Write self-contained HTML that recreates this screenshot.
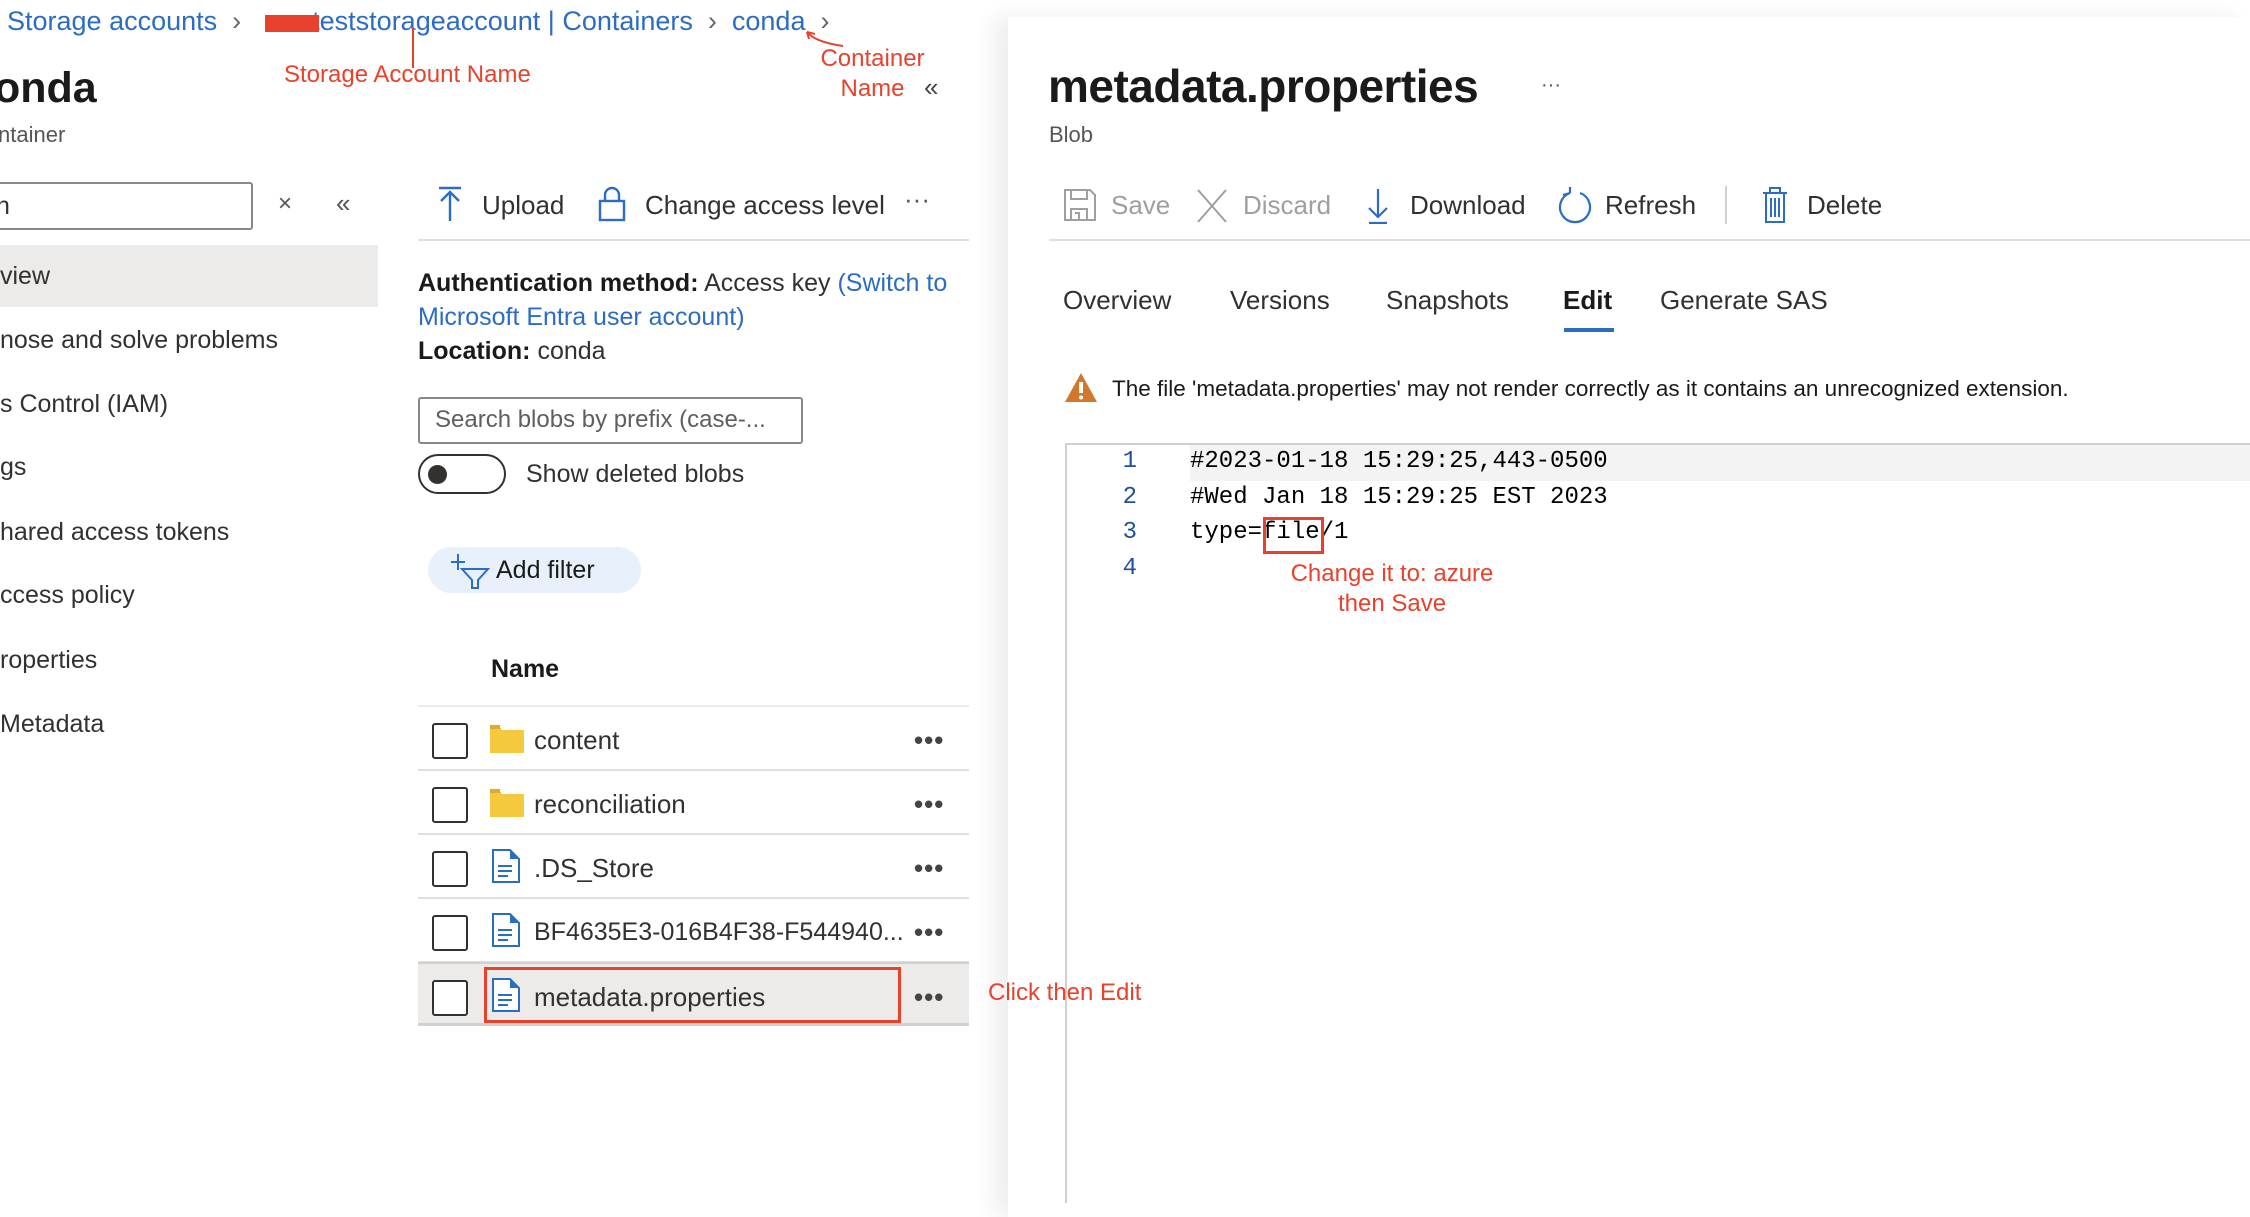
<!DOCTYPE html>
<html><head><meta charset="utf-8"><style>
*{margin:0;padding:0;box-sizing:border-box}
body{width:2250px;height:1178px;overflow:hidden;background:#fff;font-family:"Liberation Sans",sans-serif;color:#323130;position:relative}
.a{position:absolute;white-space:nowrap}
.bl{color:#2b6cc4}
.red{color:#e8412c}
.nav{font-size:25px;left:0}
.row{position:absolute;left:418px;width:551px;height:64px;border-bottom:2px solid #e1dfdd}
.cb{position:absolute;left:14px;top:16px;width:36px;height:36px;border:2px solid #323130;border-radius:3px;background:#fff}
.rt{position:absolute;left:116px;top:16px;font-size:26px;line-height:34px}
.dots{position:absolute;left:496px;top:18px;font-size:26px;letter-spacing:1px;font-weight:bold;color:#444}
.ln{position:absolute;left:1095px;width:42px;text-align:right;font-family:"Liberation Mono",monospace;font-size:24px;color:#1f4f9f;line-height:36px}
.code{position:absolute;left:1190px;font-family:"Liberation Mono",monospace;font-size:24px;color:#000;line-height:36px}
</style></head><body>

<!-- breadcrumb -->
<div class="a bl" style="left:7px;top:4px;font-size:27px;line-height:34px">Storage accounts <span style="color:#666">&nbsp;›&nbsp;</span> <span style="display:inline-block;width:56px"></span>teststorageaccount | Containers <span style="color:#666">&nbsp;›&nbsp;</span> conda <span style="color:#666">&nbsp;›</span></div>
<div class="a" style="left:265px;top:15px;width:54px;height:17px;background:#e8412c"></div>
<div class="a" style="left:412px;top:28px;width:2px;height:40px;background:#e8412c"></div>
<div class="a red" style="left:284px;top:60px;font-size:24px;line-height:30px">Storage Account Name</div>
<svg class="a" style="left:805px;top:30px" width="40" height="20"><path d="M2 2 Q10 12 38 16" stroke="#e8412c" stroke-width="2" fill="none"/><path d="M2 2 L10 4 M2 2 L4 9" stroke="#e8412c" stroke-width="2"/></svg>
<div class="a red" style="left:815px;top:44px;font-size:24px;line-height:30px;text-align:center;width:115px">Container<br>Name</div>
<div class="a" style="left:924px;top:72px;font-size:26px;color:#444">«</div>

<!-- left blade -->
<div class="a" style="left:-6px;top:60px;font-size:43px;font-weight:bold;color:#1b1a19;line-height:56px">onda</div>
<div class="a" style="left:-2px;top:122px;font-size:22px;color:#555">ntainer</div>
<div class="a" style="left:-3px;top:182px;width:256px;height:48px;border:2px solid #8a8886;border-radius:3px"></div>
<div class="a" style="left:-4px;top:192px;font-size:25px">n</div>
<div class="a" style="left:278px;top:190px;font-size:24px;color:#555">×</div>
<div class="a" style="left:336px;top:188px;font-size:26px;color:#555">«</div>
<div class="a" style="left:0;top:245px;width:378px;height:62px;background:#edebe9"></div>
<div class="a nav" style="top:262px">view</div>
<div class="a nav" style="top:326px">nose and solve problems</div>
<div class="a nav" style="top:390px">s Control (IAM)</div>
<div class="a nav" style="top:453px">gs</div>
<div class="a nav" style="top:518px">hared access tokens</div>
<div class="a nav" style="top:581px">ccess policy</div>
<div class="a nav" style="top:646px">roperties</div>
<div class="a nav" style="top:710px">Metadata</div>

<!-- container toolbar -->
<svg class="a" style="left:437px;top:186px" width="26" height="36"><path d="M2 2H24M13 35V6M4 15L13 6L22 15" stroke="#2b6cc4" stroke-width="2.4" fill="none"/></svg>
<div class="a" style="left:482px;top:190px;font-size:26px">Upload</div>
<svg class="a" style="left:598px;top:186px" width="28" height="36"><path d="M7 15V9a7 7 0 0 1 14 0v6" stroke="#2b6cc4" stroke-width="2.4" fill="none"/><rect x="2" y="15" width="24" height="19" stroke="#2b6cc4" stroke-width="2.4" fill="none"/></svg>
<div class="a" style="left:645px;top:190px;font-size:26px">Change access level</div>
<div class="a" style="left:904px;top:184px;font-size:26px;color:#555">···</div>
<div class="a" style="left:418px;top:239px;width:551px;height:2px;background:#e1dfdd"></div>

<div class="a" style="left:418px;top:266px;font-size:25px;line-height:34px"><b style="color:#1b1a19">Authentication method:</b> Access key <span class="bl">(Switch to</span></div>
<div class="a bl" style="left:418px;top:300px;font-size:25px;line-height:34px">Microsoft Entra user account)</div>
<div class="a" style="left:418px;top:334px;font-size:25px;line-height:34px"><b style="color:#1b1a19">Location:</b> conda</div>

<div class="a" style="left:418px;top:397px;width:385px;height:47px;border:2px solid #8a8886;border-radius:3px"></div>
<div class="a" style="left:435px;top:406px;font-size:24px;color:#605e5c">Search blobs by prefix (case-...</div>
<div class="a" style="left:418px;top:454px;width:88px;height:40px;border:2px solid #323130;border-radius:20px"></div>
<div class="a" style="left:428px;top:465px;width:19px;height:19px;border-radius:50%;background:#323130"></div>
<div class="a" style="left:526px;top:460px;font-size:25px">Show deleted blobs</div>

<div class="a" style="left:428px;top:547px;width:213px;height:46px;border-radius:23px;background:#e8f1fb"></div>
<svg class="a" style="left:450px;top:552px" width="40" height="38"><path d="M8 2V18M1 10H15" stroke="#2b6cc4" stroke-width="2"/><path d="M12 17H38L28 28V36L22 36V28Z" stroke="#2b6cc4" stroke-width="2" fill="none"/></svg>
<div class="a" style="left:496px;top:556px;font-size:25px;color:#1b1a19">Add filter</div>

<div class="a" style="left:491px;top:655px;font-size:25px;font-weight:bold;color:#1b1a19">Name</div>
<div class="a" style="left:418px;top:705px;width:551px;height:2px;background:#edebe9"></div>

<div class="row" style="top:707px"><div class="cb"></div><svg class="a" style="left:72px;top:18px" width="34" height="28"><path d="M0 2h10l2 3h22v23H0z" fill="#f5c93e"/><rect x="0" y="0" width="10" height="4" fill="#e0a928"/></svg><div class="rt">content</div><div class="dots">•••</div></div>
<div class="row" style="top:771px"><div class="cb"></div><svg class="a" style="left:72px;top:18px" width="34" height="28"><path d="M0 2h10l2 3h22v23H0z" fill="#f5c93e"/><rect x="0" y="0" width="10" height="4" fill="#e0a928"/></svg><div class="rt">reconciliation</div><div class="dots">•••</div></div>
<div class="row" style="top:835px"><div class="cb"></div><svg class="a" style="left:74px;top:14px" width="28" height="34"><path d="M1 1H18L27 10V33H1Z" fill="#fff" stroke="#2b6cc4" stroke-width="2"/><path d="M18 1V10H27Z" fill="#2b6cc4"/><path d="M6 17H20M6 22H20M6 27H16" stroke="#2b6cc4" stroke-width="2"/></svg><div class="rt">.DS_Store</div><div class="dots">•••</div></div>
<div class="row" style="top:899px"><div class="cb"></div><svg class="a" style="left:74px;top:14px" width="28" height="34"><path d="M1 1H18L27 10V33H1Z" fill="#fff" stroke="#2b6cc4" stroke-width="2"/><path d="M18 1V10H27Z" fill="#2b6cc4"/><path d="M6 17H20M6 22H20M6 27H16" stroke="#2b6cc4" stroke-width="2"/></svg><div class="rt" style="font-size:25px">BF4635E3-016B4F38-F544940...</div><div class="dots">•••</div></div>
<div class="row" style="top:962px;background:#edebe9;border-bottom:3px solid #d2d0ce;border-top:2px solid #d2d0ce"><div class="cb"></div><svg class="a" style="left:74px;top:14px" width="28" height="34"><path d="M1 1H18L27 10V33H1Z" fill="#fff" stroke="#2b6cc4" stroke-width="2"/><path d="M18 1V10H27Z" fill="#2b6cc4"/><path d="M6 17H20M6 22H20M6 27H16" stroke="#2b6cc4" stroke-width="2"/></svg><div class="rt">metadata.properties</div><div class="dots">•••</div></div>
<div class="a" style="left:484px;top:967px;width:417px;height:56px;border:3px solid #e8412c"></div>

<!-- right panel -->
<div class="a" style="left:1008px;top:17px;width:1242px;height:1200px;background:#fff;box-shadow:-14px 0 22px rgba(0,0,0,0.07)"></div>
<div class="a red" style="left:988px;top:979px;font-size:24px;z-index:5">Click then Edit</div>
<div class="a" style="left:1048px;top:58px;font-size:46px;font-weight:bold;color:#1b1a19;line-height:56px;letter-spacing:-0.5px">metadata.properties</div>
<div class="a" style="left:1541px;top:74px;font-size:20px;color:#555">···</div>
<div class="a" style="left:1049px;top:122px;font-size:22px;color:#555">Blob</div>

<svg class="a" style="left:1064px;top:189px" width="32" height="32"><path d="M1 1H26L31 6V31H1Z M7 1V10H23V1 M7 31V20H23V31 M11 24H15V31" stroke="#a19f9d" stroke-width="2" fill="none"/></svg>
<div class="a" style="left:1111px;top:190px;font-size:26px;color:#a19f9d">Save</div>
<svg class="a" style="left:1196px;top:188px" width="32" height="36"><path d="M2 2L30 34M30 2L2 34" stroke="#a19f9d" stroke-width="2"/></svg>
<div class="a" style="left:1243px;top:190px;font-size:26px;color:#a19f9d">Discard</div>
<svg class="a" style="left:1366px;top:188px" width="24" height="36"><path d="M12 1V28M3 20L12 29L21 20M3 35H21" stroke="#2b6cc4" stroke-width="2.2" fill="none"/></svg>
<div class="a" style="left:1410px;top:190px;font-size:26px">Download</div>
<svg class="a" style="left:1558px;top:187px" width="34" height="38"><path d="M12 6A15 15 0 1 0 22 6" stroke="#2b6cc4" stroke-width="2.2" fill="none"/><path d="M12 6L12 0M12 6L5 8" stroke="#2b6cc4" stroke-width="2.2" fill="none"/></svg>
<div class="a" style="left:1605px;top:190px;font-size:26px">Refresh</div>
<div class="a" style="left:1725px;top:186px;width:2px;height:38px;background:#d2d0ce"></div>
<svg class="a" style="left:1762px;top:186px" width="26" height="38"><path d="M1 7H25M8 7V2H18V7M4 7V36H22V7M9 12V31M13 12V31M17 12V31" stroke="#2b6cc4" stroke-width="2" fill="none"/></svg>
<div class="a" style="left:1807px;top:190px;font-size:26px">Delete</div>
<div class="a" style="left:1049px;top:239px;width:1201px;height:2px;background:#e1dfdd"></div>

<div class="a" style="left:1063px;top:285px;font-size:26px">Overview</div>
<div class="a" style="left:1230px;top:285px;font-size:26px">Versions</div>
<div class="a" style="left:1386px;top:285px;font-size:26px">Snapshots</div>
<div class="a" style="left:1563px;top:285px;font-size:26px;font-weight:bold;color:#1b1a19">Edit</div>
<div class="a" style="left:1660px;top:285px;font-size:26px">Generate SAS</div>
<div class="a" style="left:1564px;top:328px;width:50px;height:4px;background:#2b6cc4"></div>

<svg class="a" style="left:1064px;top:372px" width="34" height="32"><path d="M17 1L33 30H1Z" fill="#d2772b"/><path d="M17 10V21" stroke="#fff" stroke-width="4"/><circle cx="17" cy="25.5" r="2" fill="#fff"/></svg>
<div class="a" style="left:1112px;top:376px;font-size:22.5px;color:#1b1a19">The file 'metadata.properties' may not render correctly as it contains an unrecognized extension.</div>

<div class="a" style="left:1065px;top:443px;width:1200px;height:760px;border-left:2px solid #d2d0ce;border-top:2px solid #d2d0ce"></div>
<div class="a" style="left:1190px;top:445px;width:1060px;height:36px;background:#f3f3f3"></div>
<div class="ln" style="top:444px">1</div><div class="code" style="top:444px">#2023-01-18 15:29:25,443-0500</div>
<div class="ln" style="top:480px">2</div><div class="code" style="top:480px">#Wed Jan 18 15:29:25 EST 2023</div>
<div class="ln" style="top:515px">3</div><div class="code" style="top:515px">type=file/1</div>
<div class="ln" style="top:551px">4</div>
<div class="a" style="left:1263px;top:517px;width:61px;height:37px;border:3px solid #e8412c"></div>
<div class="a red" style="left:1242px;top:559px;width:300px;text-align:center;font-size:24px;line-height:30px">Change it to: azure<br>then Save</div>

</body></html>
